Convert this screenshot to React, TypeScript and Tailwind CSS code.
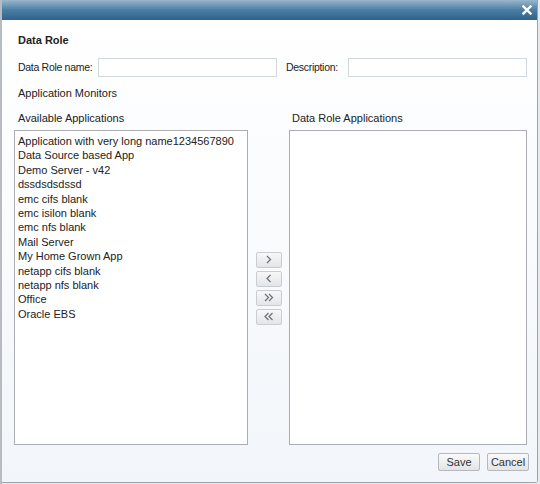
import React from 'react';

const apps = [
  'Application with very long name1234567890',
  'Data Source based App',
  'Demo Server - v42',
  'dssdsdsdssd',
  'emc cifs blank',
  'emc isilon blank',
  'emc nfs blank',
  'Mail Server',
  'My Home Grown App',
  'netapp cifs blank',
  'netapp nfs blank',
  'Office',
  'Oracle EBS',
];

const font = { fontFamily: '"Liberation Sans", Arial, sans-serif' };

function Chevron({ dir, double }: { dir: 'r' | 'l'; double?: boolean }) {
  const one = dir === 'r' ? 'M1 1 L4.5 4.5 L1 8' : 'M4.5 1 L1 4.5 L4.5 8';
  const two = dir === 'r' ? 'M5 1 L8.5 4.5 L5 8' : 'M8.5 1 L5 4.5 L8.5 8';
  return (
    <svg width={double ? 10 : 6} height="9" viewBox={double ? '0 0 10 9' : '0 0 6 9'}>
      <path d={one} stroke="#6b6f74" strokeWidth="1.2" fill="none" />
      {double && <path d={two} stroke="#6b6f74" strokeWidth="1.2" fill="none" />}
    </svg>
  );
}

function ArrowButton({ children }: { children: React.ReactNode }) {
  return (
    <button className="w-[26px] h-[16px] flex items-center justify-center rounded-[2px] border border-[#c9cdd2] bg-gradient-to-b from-[#f7f7f7] to-[#e3e5e7]">
      {children}
    </button>
  );
}

function DlgButton({ label }: { label: string }) {
  return (
    <button className="w-[42px] h-[18px] flex items-center justify-center rounded-[2px] border border-[#b5b9be] bg-gradient-to-b from-[#fafafa] to-[#e2e4e6] text-[11px] text-[#333] leading-none">
      {label}
    </button>
  );
}

export default function App() {
  return (
    <div className="w-[540px] h-[484px] flex bg-[#e9ecef] overflow-hidden text-[#222]" style={font}>
      <div className="w-[2px] bg-[#b7bcc2]" />
      <div className="w-[536px] h-[483px] flex flex-col border-r border-b border-[#9aa3ab] rounded-br-[3px]">
        <div className="h-[20px] flex items-center justify-end pr-[5px] bg-gradient-to-b from-[#9ab7cc] via-[#4b7ea4] to-[#2f628b]">
          <svg width="10" height="10" viewBox="0 0 10 10">
            <path d="M1.5 1.5 L8.5 8.5 M8.5 1.5 L1.5 8.5" stroke="#fff" strokeWidth="2.4" strokeLinecap="square" />
          </svg>
        </div>
        <div className="flex-1 flex flex-col bg-gradient-to-b from-white to-[#f2f6fa] pl-[12px] pr-[8px] text-[11px]">
          <div className="pt-[13px] pl-[4px] font-bold leading-[14px]">Data Role</div>
          <div className="flex items-center mt-[11px] h-[19px] whitespace-nowrap">
            <span className="w-[84px] shrink-0 pl-[4px] text-[10.5px] tracking-[-0.3px]">Data Role name:</span>
            <input className="w-[179px] shrink-0 h-[19px] border border-[#d2d8de] bg-white" />
            <span className="ml-[9px] w-[62px] shrink-0 text-[10.5px] tracking-[-0.3px]">Description:</span>
            <input className="w-[179px] shrink-0 h-[19px] border border-[#d2d8de] bg-white" />
          </div>
          <div className="mt-[9px] pl-[4px] leading-[14px]">Application Monitors</div>
          <div className="flex mt-[11px] flex-1">
            <div className="flex flex-col w-[234px] shrink-0">
              <div className="pl-[4px] leading-[14px] mb-[5px]">Available Applications</div>
              <div className="flex-1 border border-[#abadb3] bg-white pt-[3px] pl-[3px]">
                {apps.map((a) => (
                  <div key={a} className="leading-[14.4px] whitespace-nowrap">{a}</div>
                ))}
              </div>
            </div>
            <div className="w-[41px] shrink-0 flex flex-col items-center justify-center gap-[3px] pt-[20px]">
              <ArrowButton><Chevron dir="r" /></ArrowButton>
              <ArrowButton><Chevron dir="l" /></ArrowButton>
              <ArrowButton><Chevron dir="r" double /></ArrowButton>
              <ArrowButton><Chevron dir="l" double /></ArrowButton>
            </div>
            <div className="flex flex-col w-[238px] shrink-0">
              <div className="pl-[3px] leading-[14px] mb-[5px]">Data Role Applications</div>
              <div className="flex-1 border border-[#abadb3] bg-white" />
            </div>
          </div>
          <div className="h-[37px] flex items-start justify-end gap-[7px] pt-[8px] pr-[0px]">
            <DlgButton label="Save" />
            <DlgButton label="Cancel" />
          </div>
        </div>
      </div>
    </div>
  );
}
